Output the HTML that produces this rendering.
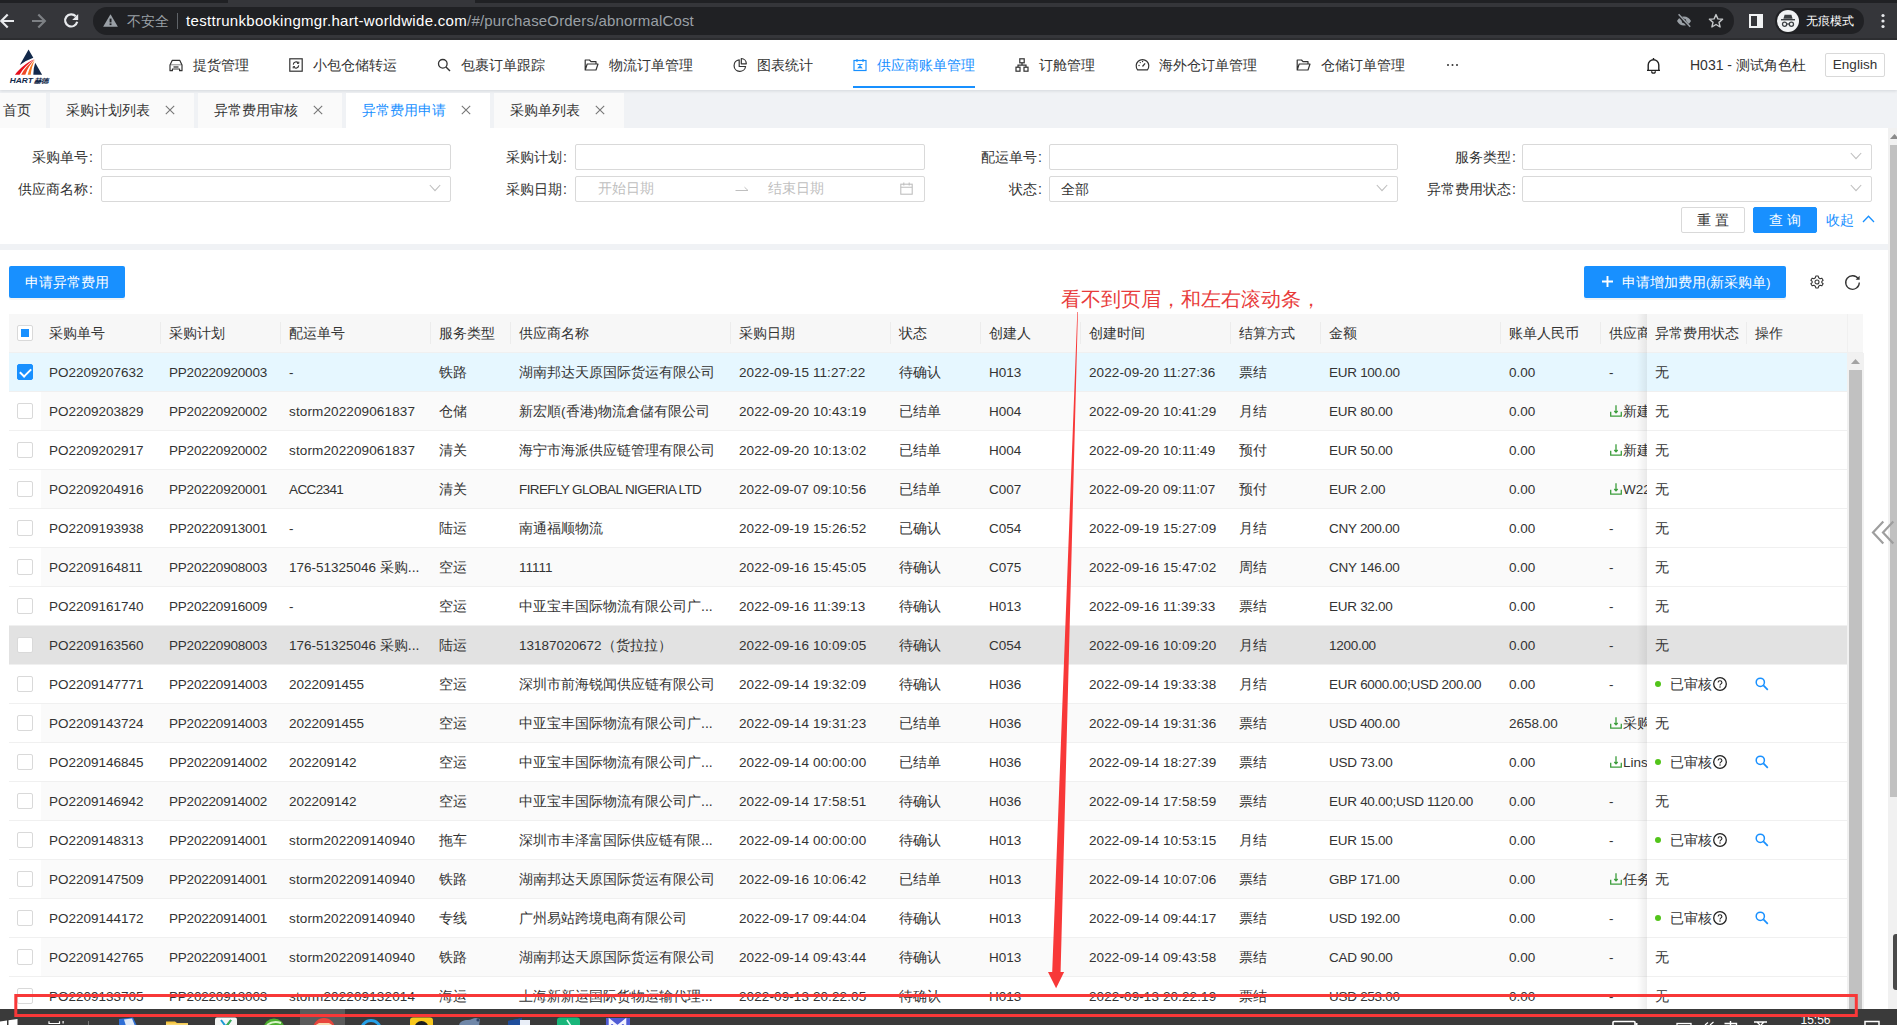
<!DOCTYPE html>
<html lang="zh"><head><meta charset="utf-8"><title>abnormalCost</title>
<style>
*{box-sizing:border-box;margin:0;padding:0}
html,body{width:1897px;height:1025px;overflow:hidden;background:#f0f2f5}
body{font-family:"Liberation Sans",sans-serif;font-size:14px;color:#333;position:relative}
.abs{position:absolute}
/* browser chrome */
#chrome{position:absolute;left:0;top:0;width:1897px;height:40px;background:#35363a}
#chrome .tabstrip{position:absolute;left:0;top:0;width:1897px;height:3px;background:#202124}
#omni{position:absolute;left:93px;top:7px;width:1641px;height:28px;border-radius:14px;background:#202124}
#omni .ns{position:absolute;left:34px;top:5px;font-size:14px;color:#9aa0a6;line-height:18px}
#omni .sep{position:absolute;left:84px;top:6px;width:1px;height:16px;background:#5f6368}
#omni .url{position:absolute;left:93px;top:4px;font-size:15px;line-height:19px;color:#fff;white-space:nowrap;letter-spacing:.31px}
#omni .url em{font-style:normal;color:#9aa0a6;letter-spacing:.17px}
#incog{position:absolute;left:1775px;top:8px;width:89px;height:26px;border-radius:13px;background:#202124}
#incog .av{position:absolute;left:2px;top:2px;width:22px;height:22px;border-radius:11px;background:#f1f3f4}
#incog .t{position:absolute;left:31px;top:5px;font-size:12.2px;line-height:16px;color:#fff;white-space:nowrap}
/* app header */
#hdr{position:absolute;left:0;top:40px;width:1897px;height:50px;background:#fff;box-shadow:0 1px 3px rgba(0,21,41,.12)}
.nav{position:absolute;top:15px;height:20px;line-height:20px;font-size:14px;color:#333;white-space:nowrap}
.nav svg{position:absolute;left:0;top:2px}
.nav span{position:absolute;left:24px;top:0}
.nav.act{color:#1890ff}
#uline{position:absolute;left:853px;top:46px;width:122px;height:2px;background:#1890ff}
#eng{position:absolute;left:1825px;top:13px;width:60px;height:24px;border:1px solid #d9d9d9;border-radius:2px;font-size:13.5px;line-height:22px;text-align:center;color:#333}
/* tabs */
.tab{position:absolute;top:93px;height:35px;background:#fafafa;font-size:14px;line-height:34px;color:#333;white-space:nowrap}
.tab .x{position:absolute;top:12px;width:10px;height:10px}
.tab.act{background:#fff;color:#1890ff}
/* filter */
#filter{position:absolute;left:0;top:128px;width:1888px;height:116px;background:#fff}
.lbl{position:absolute;height:24px;line-height:24px;font-size:14px;color:#333;text-align:right;white-space:nowrap}
.lbl b{font-weight:normal;margin-left:1.3px}
.inp{position:absolute;height:26px;border:1px solid #d9d9d9;border-radius:2px;background:#fff}
.inp .ph{position:absolute;top:0;line-height:23px;font-size:14px;color:#bfbfbf}
.inp .val{position:absolute;left:11px;top:0;line-height:24px;font-size:14px;color:#333}
.inp svg.dn{position:absolute;right:9px;top:7px}
.btn{position:absolute;height:26px;border:1px solid #d9d9d9;border-radius:2px;background:#fff;font-size:14px;line-height:24px;text-align:center;color:#333}
.btn.pri{background:#1890ff;border-color:#1890ff;color:#fff}
/* table card */
#card{position:absolute;left:0;top:250px;width:1888px;height:775px;background:#fff}
.bbtn{position:absolute;top:16px;height:32px;background:#1890ff;border-radius:2px;color:#fff;font-size:14px;line-height:32px;text-align:center;white-space:nowrap;box-shadow:0 2px 0 rgba(0,0,0,.045)}
#tbl{position:absolute;left:9px;top:314px;width:1854px;height:711px;overflow:hidden}
.thead{position:absolute;left:0;top:0;width:1854px;height:39px;background:#f7f7f7;border-bottom:1px solid #f0f0f0}
.th{position:absolute;top:0;height:38px;line-height:39px;padding-left:8px;font-size:14px;color:#333;white-space:nowrap;overflow:hidden}
.th:after{content:"";position:absolute;right:0;top:8px;width:1px;height:22px;background:#ececec}
.th.last:after,.thead .th:last-child:after{display:none}
.hcb{position:absolute;left:0;top:0;width:32px;height:38px}
.hcb i{position:absolute;left:8px;top:11px;width:16px;height:16px;border:1px solid #d9d9d9;border-radius:2px;background:#fff}
.hcb i:after{content:"";position:absolute;left:3px;top:3px;width:8px;height:8px;background:#1890ff}
.tr{position:absolute;left:0;width:1838px;height:39px;background:#fff;border-bottom:1px solid #f0f0f0}
.tr.odd{background:#fafafa}
.tr.sel{background:#e6f7ff}
.tr.hov{background:#e2e2e2}
.td{position:absolute;top:0;height:38px;line-height:38px;padding-left:8px;font-size:14px;color:#333;white-space:nowrap;overflow:hidden}
.cbc{position:absolute;left:0;top:0;width:32px;height:38px;background:#fff}
.sel .cbc{background:#e6f7ff}.hov .cbc{background:#e2e2e2}
.cb{position:absolute;left:8px;top:11px;width:16px;height:16px;border:1px solid #d9d9d9;border-radius:2px;background:#fff}
.cb.on{background:#1890ff;border-color:#1890ff}
.cb.on:after{content:"";position:absolute;left:4px;top:1px;width:5px;height:9px;border:solid #fff;border-width:0 2px 2px 0;transform:rotate(45deg)}
.fx{position:absolute;left:1638px;top:0;width:200px;height:38px;background:#fff;line-height:38px}
.sel .fx{background:#e6f7ff}.hov .fx{background:#e2e2e2}
.fx .wu{position:absolute;left:8px;top:0}
.fx .dot{position:absolute;left:8px;top:16px;width:6px;height:6px;border-radius:3px;background:#52c41a}
.fx .aud{position:absolute;left:23px;top:0}
.fx .qm{position:absolute;left:66px;top:12px}
.fx .mag{position:absolute;left:108px;top:12px}
u{text-decoration:none;font-size:13.5px}
.c1 u{letter-spacing:-.2px}.c10 u{letter-spacing:-.28px}.c5 u,.c8 u{letter-spacing:.1px}u.up{letter-spacing:-.62px}u.st{letter-spacing:.13px}
b.g{font-weight:normal;color:#333}
b.g svg{vertical-align:-1px;margin-right:1px;margin-left:1px}
#fxh{position:absolute;left:1647px;top:314px;width:200px;height:39px;background:#f7f7f7;border-bottom:1px solid #f0f0f0}
#fxshadow{position:absolute;left:1637px;top:314px;width:10px;height:711px;background:linear-gradient(to right,rgba(0,0,0,0),rgba(0,0,0,.07))}
#vsb{position:absolute;left:1847px;top:353px;width:17px;height:672px;background:#f1f1f1}
#vsb .thumb{position:absolute;left:2px;top:17px;width:13px;height:656px;background:#c1c1c1}
#psb{position:absolute;left:1888px;top:128px;width:9px;height:897px;background:#f1f1f1}
#psb .thumb{position:absolute;left:2px;top:17px;width:7px;height:652px;background:#c1c1c1}
#taskbar{position:absolute;left:0;top:1009px;width:1897px;height:16px;background:#3a3a3a;overflow:hidden}
#anno{position:absolute;left:0;top:0;width:1897px;height:1025px;pointer-events:none}
#annot{position:absolute;left:1061px;top:286px;font-size:20.25px;line-height:26px;color:#e83b3b;white-space:nowrap}
</style></head><body>
<div id="chrome">
 <div class="tabstrip"></div><div class="abs" style="left:0;top:38px;width:1897px;height:2px;background:#2d2e31"></div><div class="abs" style="left:228px;top:0;width:247px;height:3px;background:#35363a"></div>
 <svg class="abs" style="left:0;top:12px" width="90" height="18" viewBox="0 0 90 18">
  <path d="M14 9H1.500M7.700 2.500L1.200 9l6.500 6.500" fill="none" stroke="#e8eaed" stroke-width="2.200"/>
  <path d="M32 9h12.500M38.300 2.500L44.800 9l-6.500 6.500" fill="none" stroke="#7d8084" stroke-width="2.200"/>
  <path d="M75.800 4.300A6.100 6.100 0 1 0 77.200 9.800" fill="none" stroke="#e8eaed" stroke-width="2.200"/>
  <path d="M78.200 2v6h-6z" fill="#e8eaed"/>
 </svg>
 <div id="omni">
  <svg class="abs" style="left:10px;top:7px" width="15" height="13" viewBox="0 0 15 13"><path d="M7.500 .3L14.900 12.800H.1z" fill="#9aa0a6"/><rect x="6.600" y="4.600" width="1.900" height="3.800" fill="#202124"/><rect x="6.600" y="9.400" width="1.900" height="1.700" fill="#202124"/></svg>
  <div class="ns">不安全</div><div class="sep"></div>
  <div class="url">testtrunkbookingmgr.hart-worldwide.com<em>/#/purchaseOrders/abnormalCost</em></div>
  <svg class="abs" style="left:1583px;top:6px" width="16" height="16" viewBox="0 0 16 16"><path d="M1 8c1.6-3 4-4.6 7-4.6s5.4 1.600 7 4.600c-1.600 3-4 4.600-7 4.600S2.600 11 1 8z" fill="#9aa0a6"/><circle cx="8" cy="8" r="2.300" fill="#202124"/><path d="M2 1.500L14 14.500" stroke="#202124" stroke-width="3"/><path d="M2.600 1.200L14.200 13.800" stroke="#9aa0a6" stroke-width="1.500"/></svg>
  <svg class="abs" style="left:1615px;top:6px" width="16" height="16" viewBox="0 0 16 16"><path d="M8 1.600l1.900 4.300 4.700.4-3.600 3.100 1.100 4.600L8 11.500 3.900 14l1.100-4.600L1.400 6.300l4.700-.4z" fill="none" stroke="#c4c7c9" stroke-width="1.400" stroke-linejoin="round"/></svg>
 </div>
 <svg class="abs" style="left:1749px;top:14px" width="14" height="14" viewBox="0 0 14 14"><rect x="1" y="1" width="12" height="12" fill="none" stroke="#f1f3f4" stroke-width="2"/><rect x="8" y="1" width="5" height="12" fill="#f1f3f4"/></svg>
 <div id="incog"><div class="av"></div>
  <svg class="abs" style="left:5px;top:6px" width="16" height="14" viewBox="0 0 16 14"><path d="M4.600 .8h6.800l1.200 4H3.400z" fill="#3c4043"/><rect x="1" y="5" width="14" height="1.400" fill="#3c4043"/><circle cx="4.600" cy="10.200" r="2.100" fill="none" stroke="#3c4043" stroke-width="1.300"/><circle cx="11.400" cy="10.200" r="2.100" fill="none" stroke="#3c4043" stroke-width="1.300"/><path d="M6.700 10h2.600" stroke="#3c4043" stroke-width="1.200"/></svg>
  <div class="t">无痕模式</div></div>
 <svg class="abs" style="left:1881px;top:13px" width="4" height="16" viewBox="0 0 4 16"><circle cx="2" cy="2.500" r="1.600" fill="#e8eaed"/><circle cx="2" cy="8" r="1.600" fill="#e8eaed"/><circle cx="2" cy="13.500" r="1.600" fill="#e8eaed"/></svg>
</div>

<div id="hdr">
 <svg class="abs" style="left:8px;top:7px" width="42" height="38" viewBox="0 0 42 38">
  <path d="M20.550 2.500L25.300 10.700Q17.500 13.500 11.800 17.900z" fill="#13294b"/>
  <path d="M27.200 15.800L34.100 27.800H25.300Q25.300 21 27.200 15.800z" fill="#13294b"/>
  <path d="M6.900 27.800C12 21 19 15.500 26.500 12.300 20 16.500 15 21.500 11.500 27.800z" fill="#e60f1c"/>
  <path d="M13.200 27.800C16.500 21.500 21 16.500 26.600 12.600 22.500 17 19.300 22 17.300 27.800z" fill="#f04a24"/>
  <path d="M19.700 27.800C21 22 23.300 17 26.800 12.900 24.600 17.500 23.200 22.500 22.700 27.800z" fill="#f57a22"/>
  <text x="1.700" y="36.300" font-family="Liberation Sans,sans-serif" font-size="7.600" font-weight="bold" font-style="italic" fill="#13294b" textLength="23.200" lengthAdjust="spacingAndGlyphs">HART</text>
  <text x="25.500" y="36" font-family="Liberation Sans,sans-serif" font-size="6.400" font-weight="bold" font-style="italic" fill="#13294b" textLength="14.200" lengthAdjust="spacingAndGlyphs">赫德</text>
 </svg>
 <div class="nav" style="left:169px;width:90px"><svg width="14" height="16" viewBox="0 0 14 16"><path d="M1 13.700V8l2.300-4.700h7.400L13 8v5.700h-2.400V12H3.400v1.700z" fill="none" stroke="#333" stroke-width="1.200" stroke-linejoin="round"/><path d="M4.500 10h5" stroke="#333" stroke-width="1.300"/><path d="M1.500 7.800h11" stroke="#333" stroke-width=".6"/></svg><span>提货管理</span></div>
 <div class="nav" style="left:289px;width:120px"><svg width="14" height="16" viewBox="0 0 14 16"><rect x=".8" y="1.800" width="12.400" height="12.400" fill="none" stroke="#333" stroke-width="1.200"/><path d="M4.300 7.600a2.800 2.800 0 0 1 5-1.600M9.700 8.400a2.800 2.800 0 0 1-5 1.600" fill="none" stroke="#333" stroke-width="1.100"/><path d="M9.800 4.600v1.800H8M4.200 11.400V9.600H6" fill="none" stroke="#333" stroke-width="1"/></svg><span>小包仓储转运</span></div>
 <div class="nav" style="left:437px;width:120px"><svg width="14" height="16" viewBox="0 0 14 16"><circle cx="5.800" cy="6.800" r="4.300" fill="none" stroke="#333" stroke-width="1.300"/><path d="M9 10l4 4" stroke="#333" stroke-width="1.400"/></svg><span>包裹订单跟踪</span></div>
 <div class="nav" style="left:584px;width:120px"><svg width="15" height="16" viewBox="0 0 15 16"><path d="M1.200 13V3h4.300l1.500 1.700h5v2.300M1.200 13l2-6h10.800l-2 6z" fill="none" stroke="#333" stroke-width="1.200" stroke-linejoin="round"/></svg><span style="left:25px">物流订单管理</span></div>
 <div class="nav" style="left:733px;width:90px"><svg width="14" height="16" viewBox="0 0 14 16"><path d="M6.200 2.800A5.800 5.800 0 1 0 12.600 9.500H6.200z" fill="none" stroke="#333" stroke-width="1.200" stroke-linejoin="round"/><path d="M8.300 1.500a5.300 5.300 0 0 1 5 5.300h-5z" fill="none" stroke="#333" stroke-width="1.200" stroke-linejoin="round"/></svg><span>图表统计</span></div>
 <div class="nav act" style="left:853px;width:130px"><svg width="14" height="16" viewBox="0 0 14 16"><rect x="1" y="3.500" width="12" height="10" fill="none" stroke="#1890ff" stroke-width="1.200"/><path d="M4 2v3M10 2v3M4.500 7.500h5M7 7.500v4M4.800 11.500l1.600-2M9.200 11.500L7.600 9.500" fill="none" stroke="#1890ff" stroke-width="1.100"/></svg><span>供应商账单管理</span></div>
 <div class="nav" style="left:1015px;width:90px"><svg width="14" height="16" viewBox="0 0 14 16"><rect x="4.800" y="1.800" width="4.400" height="4" fill="none" stroke="#333" stroke-width="1.200"/><rect x="1" y="10.200" width="4" height="4" fill="none" stroke="#333" stroke-width="1.200"/><rect x="9" y="10.200" width="4" height="4" fill="none" stroke="#333" stroke-width="1.200"/><path d="M7 5.800v2.400M3 10.200v-2h8v2" fill="none" stroke="#333" stroke-width="1.200"/></svg><span>订舱管理</span></div>
 <div class="nav" style="left:1135px;width:130px"><svg width="15" height="16" viewBox="0 0 15 16"><path d="M2.600 12.800a6.300 6.300 0 1 1 9.800 0z" fill="none" stroke="#333" stroke-width="1.200" stroke-linejoin="round"/><path d="M7.500 9.500l2.600-3.200" stroke="#333" stroke-width="1.200"/><path d="M4 8.500h.1M5.200 5.600h.1M7.500 4.500h.1" stroke="#333" stroke-width="1.300" stroke-linecap="round"/></svg><span>海外仓订单管理</span></div>
 <div class="nav" style="left:1296px;width:120px"><svg width="15" height="16" viewBox="0 0 15 16"><path d="M1.200 13V3h4.300l1.500 1.700h5v2.300M1.200 13l2-6h10.800l-2 6z" fill="none" stroke="#333" stroke-width="1.200" stroke-linejoin="round"/></svg><span style="left:25px">仓储订单管理</span></div>
 <svg class="abs" style="left:1446px;top:23px" width="13" height="4" viewBox="0 0 13 4"><circle cx="2" cy="2" r="1" fill="#333"/><circle cx="6.500" cy="2" r="1" fill="#333"/><circle cx="11" cy="2" r="1" fill="#333"/></svg>
 <svg class="abs" style="left:1646px;top:17px" width="15" height="18" viewBox="0 0 15 18"><path d="M2.200 13.200V8a5.300 5.300 0 0 1 10.600 0v5.200M1 13.400h13" fill="none" stroke="#222" stroke-width="1.400"/><path d="M7.500 1v1.800" stroke="#222" stroke-width="1.400"/><path d="M5.600 14.200a1.900 1.900 0 0 0 3.800 0" fill="none" stroke="#222" stroke-width="1.300"/></svg>
 <div class="abs" style="left:1690px;top:15px;line-height:20px;font-size:14px;white-space:nowrap">H031 - 测试角色杜</div>
 <div id="eng">English</div>
 <div id="uline"></div>
</div>

<div class="tab" style="left:0;width:46px"><span class="abs" style="left:3px">首页</span></div>
<div class="tab" style="left:50px;width:144px"><span class="abs" style="left:16px">采购计划列表</span><svg class="x" style="left:115px" viewBox="0 0 10 10"><path d="M.8.8l8.400 8.400M9.200.8L.8 9.200" stroke="#777" stroke-width="1.100"/></svg></div>
<div class="tab" style="left:198px;width:144px"><span class="abs" style="left:16px">异常费用审核</span><svg class="x" style="left:115px" viewBox="0 0 10 10"><path d="M.8.8l8.400 8.400M9.200.8L.8 9.200" stroke="#777" stroke-width="1.100"/></svg></div>
<div class="tab act" style="left:346px;width:144px"><span class="abs" style="left:16px">异常费用申请</span><svg class="x" style="left:115px" viewBox="0 0 10 10"><path d="M.8.8l8.400 8.400M9.200.8L.8 9.200" stroke="#777" stroke-width="1.100"/></svg></div>
<div class="tab" style="left:494px;width:130px"><span class="abs" style="left:16px">采购单列表</span><svg class="x" style="left:101px" viewBox="0 0 10 10"><path d="M.8.8l8.400 8.400M9.200.8L.8 9.200" stroke="#777" stroke-width="1.100"/></svg></div>

<div id="filter">
 <div class="lbl" style="left:0;width:93px;top:17px">采购单号<b>:</b></div><div class="inp" style="left:101px;top:16px;width:350px"></div>
 <div class="lbl" style="left:0;width:93px;top:49px">供应商名称<b>:</b></div><div class="inp" style="left:101px;top:48px;width:350px"><svg class="dn" width="12" height="8" viewBox="0 0 12 8"><path d="M.8 1l5.200 5.600L11.200 1" fill="none" stroke="#bfbfbf" stroke-width="1.100"/></svg></div>
 <div class="lbl" style="left:470px;width:97px;top:17px">采购计划<b>:</b></div><div class="inp" style="left:575px;top:16px;width:350px"></div>
 <div class="lbl" style="left:470px;width:97px;top:49px">采购日期<b>:</b></div><div class="inp" style="left:575px;top:48px;width:350px"><span class="ph" style="left:22px">开始日期</span><svg class="abs" style="left:159px;top:8px" width="14" height="8" viewBox="0 0 14 8"><path d="M.5 5.500h12.500M9.500 2.200l3.500 3.300" fill="none" stroke="#bfbfbf" stroke-width="1"/></svg><span class="ph" style="left:192px">结束日期</span><svg class="abs" style="left:324px;top:5px" width="13" height="13" viewBox="0 0 13 13"><rect x=".8" y="2.200" width="11.400" height="10" fill="none" stroke="#bfbfbf" stroke-width="1.100"/><path d="M.8 5.200h11.400M3.800.5v3M9.200.5v3" stroke="#bfbfbf" stroke-width="1.100"/></svg></div>
 <div class="lbl" style="left:940px;width:102px;top:17px">配运单号<b>:</b></div><div class="inp" style="left:1049px;top:16px;width:349px"></div>
 <div class="lbl" style="left:940px;width:102px;top:49px">状态<b>:</b></div><div class="inp" style="left:1049px;top:48px;width:349px"><span class="val">全部</span><svg class="dn" width="12" height="8" viewBox="0 0 12 8"><path d="M.8 1l5.200 5.600L11.200 1" fill="none" stroke="#bfbfbf" stroke-width="1.100"/></svg></div>
 <div class="lbl" style="left:1400px;width:116px;top:17px">服务类型<b>:</b></div><div class="inp" style="left:1522px;top:16px;width:350px"><svg class="dn" width="12" height="8" viewBox="0 0 12 8"><path d="M.8 1l5.200 5.600L11.200 1" fill="none" stroke="#bfbfbf" stroke-width="1.100"/></svg></div>
 <div class="lbl" style="left:1400px;width:116px;top:49px">异常费用状态<b>:</b></div><div class="inp" style="left:1522px;top:48px;width:350px"><svg class="dn" width="12" height="8" viewBox="0 0 12 8"><path d="M.8 1l5.200 5.600L11.200 1" fill="none" stroke="#bfbfbf" stroke-width="1.100"/></svg></div>
 <div class="btn" style="left:1681px;top:79px;width:64px">重 置</div>
 <div class="btn pri" style="left:1753px;top:79px;width:64px">查 询</div>
 <div class="abs" style="left:1826px;top:79px;line-height:26px;font-size:14px;color:#1890ff;white-space:nowrap">收起</div>
 <svg class="abs" style="left:1862px;top:87px" width="13" height="8" viewBox="0 0 13 8"><path d="M1 7l5.500-5.800L12 7" fill="none" stroke="#1890ff" stroke-width="1.300"/></svg>
</div>

<div id="card">
 <div class="bbtn" style="left:9px;width:116px">申请异常费用</div>
 <div class="bbtn" style="left:1584px;width:202px"><svg class="abs" style="left:18px;top:10px" width="11" height="11" viewBox="0 0 11 11"><path d="M5.500 0v11M0 5.500h11" stroke="#fff" stroke-width="1.900"/></svg><span class="abs" style="left:38px;top:0">申请增加费用<u style="font-size:12.5px">(</u>新采购单<u style="font-size:12.5px">)</u></span></div>
 <svg class="abs" style="left:1810px;top:25px" width="14" height="14" viewBox="0 0 16 16"><path d="M6.600 1.200h2.800l.5 2 1.700 1 2-.6 1.400 2.400-1.500 1.400v1.200l1.500 1.400-1.400 2.400-2-.6-1.700 1-.5 2H6.600l-.5-2-1.700-1-2 .6L1 10l1.500-1.400V7.400L1 6l1.400-2.400 2 .6 1.700-1z" fill="none" stroke="#333" stroke-width="1.200" stroke-linejoin="round"/><circle cx="8" cy="8" r="2.300" fill="none" stroke="#333" stroke-width="1.200"/></svg>
 <svg class="abs" style="left:1844px;top:24px" width="17" height="17" viewBox="0 0 17 17"><path d="M14.300 5A6.800 6.800 0 1 0 15.300 8.500" fill="none" stroke="#333" stroke-width="1.300"/><path d="M15.600 1.800v4h-4z" fill="#333"/></svg>
</div>

<div id="tbl">
<div class="thead">
<div class="hcb"><i></i></div>
<div class="th" style="left:32px;width:120px"><span>采购单号</span></div>
<div class="th" style="left:152px;width:120px"><span>采购计划</span></div>
<div class="th" style="left:272px;width:150px"><span>配运单号</span></div>
<div class="th" style="left:422px;width:80px"><span>服务类型</span></div>
<div class="th" style="left:502px;width:220px"><span>供应商名称</span></div>
<div class="th" style="left:722px;width:160px"><span>采购日期</span></div>
<div class="th" style="left:882px;width:90px"><span>状态</span></div>
<div class="th" style="left:972px;width:100px"><span>创建人</span></div>
<div class="th" style="left:1072px;width:150px"><span>创建时间</span></div>
<div class="th" style="left:1222px;width:90px"><span>结算方式</span></div>
<div class="th" style="left:1312px;width:180px"><span>金额</span></div>
<div class="th" style="left:1492px;width:100px"><span>账单人民币</span></div>
<div class="th" style="left:1592px;width:46px"><span>供应商</span></div>
</div>
<div class="tr sel" style="top:39px">
<div class="cbc"><i class="cb on"></i></div>
<div class="td c0" style="left:32px;width:120px"><span><u>PO2209207632</u></span></div>
<div class="td c1" style="left:152px;width:120px"><span><u>PP20220920003</u></span></div>
<div class="td c2" style="left:272px;width:150px"><span><u>-</u></span></div>
<div class="td c3" style="left:422px;width:80px"><span>铁路</span></div>
<div class="td c4" style="left:502px;width:220px"><span>湖南邦达天原国际货运有限公司</span></div>
<div class="td c5" style="left:722px;width:160px"><span><u>2022-09-15 11:27:22</u></span></div>
<div class="td c6" style="left:882px;width:90px"><span>待确认</span></div>
<div class="td c7" style="left:972px;width:100px"><span><u>H013</u></span></div>
<div class="td c8" style="left:1072px;width:150px"><span><u>2022-09-20 11:27:36</u></span></div>
<div class="td c9" style="left:1222px;width:90px"><span>票结</span></div>
<div class="td c10" style="left:1312px;width:180px"><span><u>EUR 100.00</u></span></div>
<div class="td c11" style="left:1492px;width:100px"><span><u>0.00</u></span></div>
<div class="td c12" style="left:1592px;width:46px"><span><u>-</u></span></div>
<div class="fx"><span class="wu">无</span></div>
</div>
<div class="tr odd" style="top:78px">
<div class="cbc"><i class="cb"></i></div>
<div class="td c0" style="left:32px;width:120px"><span><u>PO2209203829</u></span></div>
<div class="td c1" style="left:152px;width:120px"><span><u>PP20220920002</u></span></div>
<div class="td c2" style="left:272px;width:150px"><span><u class="st">storm202209061837</u></span></div>
<div class="td c3" style="left:422px;width:80px"><span>仓储</span></div>
<div class="td c4" style="left:502px;width:220px"><span>新宏順<u>(</u>香港<u>)</u>物流倉儲有限公司</span></div>
<div class="td c5" style="left:722px;width:160px"><span><u>2022-09-20 10:43:19</u></span></div>
<div class="td c6" style="left:882px;width:90px"><span>已结单</span></div>
<div class="td c7" style="left:972px;width:100px"><span><u>H004</u></span></div>
<div class="td c8" style="left:1072px;width:150px"><span><u>2022-09-20 10:41:29</u></span></div>
<div class="td c9" style="left:1222px;width:90px"><span>月结</span></div>
<div class="td c10" style="left:1312px;width:180px"><span><u>EUR 80.00</u></span></div>
<div class="td c11" style="left:1492px;width:100px"><span><u>0.00</u></span></div>
<div class="td c12" style="left:1592px;width:46px"><span><b class="g"><svg class="dl" viewBox="0 0 12 12" width="12" height="12"><path d="M6 .3v7.400M4.300 6L6 7.800 7.700 6M.7 6.800v4.400h10.600V6.800" fill="none" stroke="#3c9d3c" stroke-width="1.300"/></svg>新建</b></span></div>
<div class="fx"><span class="wu">无</span></div>
</div>
<div class="tr" style="top:117px">
<div class="cbc"><i class="cb"></i></div>
<div class="td c0" style="left:32px;width:120px"><span><u>PO2209202917</u></span></div>
<div class="td c1" style="left:152px;width:120px"><span><u>PP20220920002</u></span></div>
<div class="td c2" style="left:272px;width:150px"><span><u class="st">storm202209061837</u></span></div>
<div class="td c3" style="left:422px;width:80px"><span>清关</span></div>
<div class="td c4" style="left:502px;width:220px"><span>海宁市海派供应链管理有限公司</span></div>
<div class="td c5" style="left:722px;width:160px"><span><u>2022-09-20 10:13:02</u></span></div>
<div class="td c6" style="left:882px;width:90px"><span>已结单</span></div>
<div class="td c7" style="left:972px;width:100px"><span><u>H004</u></span></div>
<div class="td c8" style="left:1072px;width:150px"><span><u>2022-09-20 10:11:49</u></span></div>
<div class="td c9" style="left:1222px;width:90px"><span>预付</span></div>
<div class="td c10" style="left:1312px;width:180px"><span><u>EUR 50.00</u></span></div>
<div class="td c11" style="left:1492px;width:100px"><span><u>0.00</u></span></div>
<div class="td c12" style="left:1592px;width:46px"><span><b class="g"><svg class="dl" viewBox="0 0 12 12" width="12" height="12"><path d="M6 .3v7.400M4.300 6L6 7.800 7.700 6M.7 6.800v4.400h10.600V6.800" fill="none" stroke="#3c9d3c" stroke-width="1.300"/></svg>新建</b></span></div>
<div class="fx"><span class="wu">无</span></div>
</div>
<div class="tr odd" style="top:156px">
<div class="cbc"><i class="cb"></i></div>
<div class="td c0" style="left:32px;width:120px"><span><u>PO2209204916</u></span></div>
<div class="td c1" style="left:152px;width:120px"><span><u>PP20220920001</u></span></div>
<div class="td c2" style="left:272px;width:150px"><span><u class="up">ACC2341</u></span></div>
<div class="td c3" style="left:422px;width:80px"><span>清关</span></div>
<div class="td c4" style="left:502px;width:220px"><span><u class="up">FIREFLY GLOBAL NIGERIA LTD</u></span></div>
<div class="td c5" style="left:722px;width:160px"><span><u>2022-09-07 09:10:56</u></span></div>
<div class="td c6" style="left:882px;width:90px"><span>已结单</span></div>
<div class="td c7" style="left:972px;width:100px"><span><u>C007</u></span></div>
<div class="td c8" style="left:1072px;width:150px"><span><u>2022-09-20 09:11:07</u></span></div>
<div class="td c9" style="left:1222px;width:90px"><span>预付</span></div>
<div class="td c10" style="left:1312px;width:180px"><span><u>EUR 2.00</u></span></div>
<div class="td c11" style="left:1492px;width:100px"><span><u>0.00</u></span></div>
<div class="td c12" style="left:1592px;width:46px"><span><b class="g"><svg class="dl" viewBox="0 0 12 12" width="12" height="12"><path d="M6 .3v7.400M4.300 6L6 7.800 7.700 6M.7 6.800v4.400h10.600V6.800" fill="none" stroke="#3c9d3c" stroke-width="1.300"/></svg><u>W22</u></b></span></div>
<div class="fx"><span class="wu">无</span></div>
</div>
<div class="tr" style="top:195px">
<div class="cbc"><i class="cb"></i></div>
<div class="td c0" style="left:32px;width:120px"><span><u>PO2209193938</u></span></div>
<div class="td c1" style="left:152px;width:120px"><span><u>PP20220913001</u></span></div>
<div class="td c2" style="left:272px;width:150px"><span><u>-</u></span></div>
<div class="td c3" style="left:422px;width:80px"><span>陆运</span></div>
<div class="td c4" style="left:502px;width:220px"><span>南通福顺物流</span></div>
<div class="td c5" style="left:722px;width:160px"><span><u>2022-09-19 15:26:52</u></span></div>
<div class="td c6" style="left:882px;width:90px"><span>已确认</span></div>
<div class="td c7" style="left:972px;width:100px"><span><u>C054</u></span></div>
<div class="td c8" style="left:1072px;width:150px"><span><u>2022-09-19 15:27:09</u></span></div>
<div class="td c9" style="left:1222px;width:90px"><span>月结</span></div>
<div class="td c10" style="left:1312px;width:180px"><span><u>CNY 200.00</u></span></div>
<div class="td c11" style="left:1492px;width:100px"><span><u>0.00</u></span></div>
<div class="td c12" style="left:1592px;width:46px"><span><u>-</u></span></div>
<div class="fx"><span class="wu">无</span></div>
</div>
<div class="tr odd" style="top:234px">
<div class="cbc"><i class="cb"></i></div>
<div class="td c0" style="left:32px;width:120px"><span><u>PO2209164811</u></span></div>
<div class="td c1" style="left:152px;width:120px"><span><u>PP20220908003</u></span></div>
<div class="td c2" style="left:272px;width:150px"><span><u>176-51325046 </u>采购...</span></div>
<div class="td c3" style="left:422px;width:80px"><span>空运</span></div>
<div class="td c4" style="left:502px;width:220px"><span><u>11111</u></span></div>
<div class="td c5" style="left:722px;width:160px"><span><u>2022-09-16 15:45:05</u></span></div>
<div class="td c6" style="left:882px;width:90px"><span>待确认</span></div>
<div class="td c7" style="left:972px;width:100px"><span><u>C075</u></span></div>
<div class="td c8" style="left:1072px;width:150px"><span><u>2022-09-16 15:47:02</u></span></div>
<div class="td c9" style="left:1222px;width:90px"><span>周结</span></div>
<div class="td c10" style="left:1312px;width:180px"><span><u>CNY 146.00</u></span></div>
<div class="td c11" style="left:1492px;width:100px"><span><u>0.00</u></span></div>
<div class="td c12" style="left:1592px;width:46px"><span><u>-</u></span></div>
<div class="fx"><span class="wu">无</span></div>
</div>
<div class="tr" style="top:273px">
<div class="cbc"><i class="cb"></i></div>
<div class="td c0" style="left:32px;width:120px"><span><u>PO2209161740</u></span></div>
<div class="td c1" style="left:152px;width:120px"><span><u>PP20220916009</u></span></div>
<div class="td c2" style="left:272px;width:150px"><span><u>-</u></span></div>
<div class="td c3" style="left:422px;width:80px"><span>空运</span></div>
<div class="td c4" style="left:502px;width:220px"><span>中亚宝丰国际物流有限公司广...</span></div>
<div class="td c5" style="left:722px;width:160px"><span><u>2022-09-16 11:39:13</u></span></div>
<div class="td c6" style="left:882px;width:90px"><span>待确认</span></div>
<div class="td c7" style="left:972px;width:100px"><span><u>H013</u></span></div>
<div class="td c8" style="left:1072px;width:150px"><span><u>2022-09-16 11:39:33</u></span></div>
<div class="td c9" style="left:1222px;width:90px"><span>票结</span></div>
<div class="td c10" style="left:1312px;width:180px"><span><u>EUR 32.00</u></span></div>
<div class="td c11" style="left:1492px;width:100px"><span><u>0.00</u></span></div>
<div class="td c12" style="left:1592px;width:46px"><span><u>-</u></span></div>
<div class="fx"><span class="wu">无</span></div>
</div>
<div class="tr hov" style="top:312px">
<div class="cbc"><i class="cb"></i></div>
<div class="td c0" style="left:32px;width:120px"><span><u>PO2209163560</u></span></div>
<div class="td c1" style="left:152px;width:120px"><span><u>PP20220908003</u></span></div>
<div class="td c2" style="left:272px;width:150px"><span><u>176-51325046 </u>采购...</span></div>
<div class="td c3" style="left:422px;width:80px"><span>陆运</span></div>
<div class="td c4" style="left:502px;width:220px"><span><u>13187020672</u>（货拉拉）</span></div>
<div class="td c5" style="left:722px;width:160px"><span><u>2022-09-16 10:09:05</u></span></div>
<div class="td c6" style="left:882px;width:90px"><span>待确认</span></div>
<div class="td c7" style="left:972px;width:100px"><span><u>C054</u></span></div>
<div class="td c8" style="left:1072px;width:150px"><span><u>2022-09-16 10:09:20</u></span></div>
<div class="td c9" style="left:1222px;width:90px"><span>月结</span></div>
<div class="td c10" style="left:1312px;width:180px"><span><u>1200.00</u></span></div>
<div class="td c11" style="left:1492px;width:100px"><span><u>0.00</u></span></div>
<div class="td c12" style="left:1592px;width:46px"><span><u>-</u></span></div>
<div class="fx"><span class="wu">无</span></div>
</div>
<div class="tr" style="top:351px">
<div class="cbc"><i class="cb"></i></div>
<div class="td c0" style="left:32px;width:120px"><span><u>PO2209147771</u></span></div>
<div class="td c1" style="left:152px;width:120px"><span><u>PP20220914003</u></span></div>
<div class="td c2" style="left:272px;width:150px"><span><u>2022091455</u></span></div>
<div class="td c3" style="left:422px;width:80px"><span>空运</span></div>
<div class="td c4" style="left:502px;width:220px"><span>深圳市前海锐闻供应链有限公司</span></div>
<div class="td c5" style="left:722px;width:160px"><span><u>2022-09-14 19:32:09</u></span></div>
<div class="td c6" style="left:882px;width:90px"><span>待确认</span></div>
<div class="td c7" style="left:972px;width:100px"><span><u>H036</u></span></div>
<div class="td c8" style="left:1072px;width:150px"><span><u>2022-09-14 19:33:38</u></span></div>
<div class="td c9" style="left:1222px;width:90px"><span>月结</span></div>
<div class="td c10" style="left:1312px;width:180px"><span><u>EUR 6000.00;USD 200.00</u></span></div>
<div class="td c11" style="left:1492px;width:100px"><span><u>0.00</u></span></div>
<div class="td c12" style="left:1592px;width:46px"><span><u>-</u></span></div>
<div class="fx"><span class="dot"></span><span class="aud">已审核</span><svg class="qm" viewBox="0 0 14 14" width="14" height="14"><circle cx="7" cy="7" r="6.300" fill="none" stroke="#222" stroke-width="1.300"/><path d="M5.100 5.600c0-1.200.9-1.900 1.900-1.900s1.900.7 1.900 1.800c0 1.300-1.900 1.400-1.900 2.900" fill="none" stroke="#222" stroke-width="1.100"/><circle cx="7" cy="10.100" r=".75" fill="#222"/></svg><svg class="mag" viewBox="0 0 14 14" width="14" height="14"><circle cx="5.300" cy="5.300" r="4.100" fill="none" stroke="#1890ff" stroke-width="1.500"/><path d="M8.400 8.400L12.800 12.800" stroke="#1890ff" stroke-width="1.700"/></svg></div>
</div>
<div class="tr odd" style="top:390px">
<div class="cbc"><i class="cb"></i></div>
<div class="td c0" style="left:32px;width:120px"><span><u>PO2209143724</u></span></div>
<div class="td c1" style="left:152px;width:120px"><span><u>PP20220914003</u></span></div>
<div class="td c2" style="left:272px;width:150px"><span><u>2022091455</u></span></div>
<div class="td c3" style="left:422px;width:80px"><span>空运</span></div>
<div class="td c4" style="left:502px;width:220px"><span>中亚宝丰国际物流有限公司广...</span></div>
<div class="td c5" style="left:722px;width:160px"><span><u>2022-09-14 19:31:23</u></span></div>
<div class="td c6" style="left:882px;width:90px"><span>已结单</span></div>
<div class="td c7" style="left:972px;width:100px"><span><u>H036</u></span></div>
<div class="td c8" style="left:1072px;width:150px"><span><u>2022-09-14 19:31:36</u></span></div>
<div class="td c9" style="left:1222px;width:90px"><span>票结</span></div>
<div class="td c10" style="left:1312px;width:180px"><span><u>USD 400.00</u></span></div>
<div class="td c11" style="left:1492px;width:100px"><span><u>2658.00</u></span></div>
<div class="td c12" style="left:1592px;width:46px"><span><b class="g"><svg class="dl" viewBox="0 0 12 12" width="12" height="12"><path d="M6 .3v7.400M4.300 6L6 7.800 7.700 6M.7 6.800v4.400h10.600V6.800" fill="none" stroke="#3c9d3c" stroke-width="1.300"/></svg>采购</b></span></div>
<div class="fx"><span class="wu">无</span></div>
</div>
<div class="tr" style="top:429px">
<div class="cbc"><i class="cb"></i></div>
<div class="td c0" style="left:32px;width:120px"><span><u>PO2209146845</u></span></div>
<div class="td c1" style="left:152px;width:120px"><span><u>PP20220914002</u></span></div>
<div class="td c2" style="left:272px;width:150px"><span><u>202209142</u></span></div>
<div class="td c3" style="left:422px;width:80px"><span>空运</span></div>
<div class="td c4" style="left:502px;width:220px"><span>中亚宝丰国际物流有限公司广...</span></div>
<div class="td c5" style="left:722px;width:160px"><span><u>2022-09-14 00:00:00</u></span></div>
<div class="td c6" style="left:882px;width:90px"><span>已结单</span></div>
<div class="td c7" style="left:972px;width:100px"><span><u>H036</u></span></div>
<div class="td c8" style="left:1072px;width:150px"><span><u>2022-09-14 18:27:39</u></span></div>
<div class="td c9" style="left:1222px;width:90px"><span>票结</span></div>
<div class="td c10" style="left:1312px;width:180px"><span><u>USD 73.00</u></span></div>
<div class="td c11" style="left:1492px;width:100px"><span><u>0.00</u></span></div>
<div class="td c12" style="left:1592px;width:46px"><span><b class="g"><svg class="dl" viewBox="0 0 12 12" width="12" height="12"><path d="M6 .3v7.400M4.300 6L6 7.800 7.700 6M.7 6.800v4.400h10.600V6.800" fill="none" stroke="#3c9d3c" stroke-width="1.300"/></svg><u>Lins</u></b></span></div>
<div class="fx"><span class="dot"></span><span class="aud">已审核</span><svg class="qm" viewBox="0 0 14 14" width="14" height="14"><circle cx="7" cy="7" r="6.300" fill="none" stroke="#222" stroke-width="1.300"/><path d="M5.100 5.600c0-1.200.9-1.900 1.900-1.900s1.900.7 1.900 1.800c0 1.300-1.900 1.400-1.900 2.900" fill="none" stroke="#222" stroke-width="1.100"/><circle cx="7" cy="10.100" r=".75" fill="#222"/></svg><svg class="mag" viewBox="0 0 14 14" width="14" height="14"><circle cx="5.300" cy="5.300" r="4.100" fill="none" stroke="#1890ff" stroke-width="1.500"/><path d="M8.400 8.400L12.800 12.800" stroke="#1890ff" stroke-width="1.700"/></svg></div>
</div>
<div class="tr odd" style="top:468px">
<div class="cbc"><i class="cb"></i></div>
<div class="td c0" style="left:32px;width:120px"><span><u>PO2209146942</u></span></div>
<div class="td c1" style="left:152px;width:120px"><span><u>PP20220914002</u></span></div>
<div class="td c2" style="left:272px;width:150px"><span><u>202209142</u></span></div>
<div class="td c3" style="left:422px;width:80px"><span>空运</span></div>
<div class="td c4" style="left:502px;width:220px"><span>中亚宝丰国际物流有限公司广...</span></div>
<div class="td c5" style="left:722px;width:160px"><span><u>2022-09-14 17:58:51</u></span></div>
<div class="td c6" style="left:882px;width:90px"><span>待确认</span></div>
<div class="td c7" style="left:972px;width:100px"><span><u>H036</u></span></div>
<div class="td c8" style="left:1072px;width:150px"><span><u>2022-09-14 17:58:59</u></span></div>
<div class="td c9" style="left:1222px;width:90px"><span>票结</span></div>
<div class="td c10" style="left:1312px;width:180px"><span><u>EUR 40.00;USD 1120.00</u></span></div>
<div class="td c11" style="left:1492px;width:100px"><span><u>0.00</u></span></div>
<div class="td c12" style="left:1592px;width:46px"><span><u>-</u></span></div>
<div class="fx"><span class="wu">无</span></div>
</div>
<div class="tr" style="top:507px">
<div class="cbc"><i class="cb"></i></div>
<div class="td c0" style="left:32px;width:120px"><span><u>PO2209148313</u></span></div>
<div class="td c1" style="left:152px;width:120px"><span><u>PP20220914001</u></span></div>
<div class="td c2" style="left:272px;width:150px"><span><u class="st">storm202209140940</u></span></div>
<div class="td c3" style="left:422px;width:80px"><span>拖车</span></div>
<div class="td c4" style="left:502px;width:220px"><span>深圳市丰泽富国际供应链有限...</span></div>
<div class="td c5" style="left:722px;width:160px"><span><u>2022-09-14 00:00:00</u></span></div>
<div class="td c6" style="left:882px;width:90px"><span>待确认</span></div>
<div class="td c7" style="left:972px;width:100px"><span><u>H013</u></span></div>
<div class="td c8" style="left:1072px;width:150px"><span><u>2022-09-14 10:53:15</u></span></div>
<div class="td c9" style="left:1222px;width:90px"><span>月结</span></div>
<div class="td c10" style="left:1312px;width:180px"><span><u>EUR 15.00</u></span></div>
<div class="td c11" style="left:1492px;width:100px"><span><u>0.00</u></span></div>
<div class="td c12" style="left:1592px;width:46px"><span><u>-</u></span></div>
<div class="fx"><span class="dot"></span><span class="aud">已审核</span><svg class="qm" viewBox="0 0 14 14" width="14" height="14"><circle cx="7" cy="7" r="6.300" fill="none" stroke="#222" stroke-width="1.300"/><path d="M5.100 5.600c0-1.200.9-1.900 1.900-1.900s1.900.7 1.900 1.800c0 1.300-1.900 1.400-1.900 2.900" fill="none" stroke="#222" stroke-width="1.100"/><circle cx="7" cy="10.100" r=".75" fill="#222"/></svg><svg class="mag" viewBox="0 0 14 14" width="14" height="14"><circle cx="5.300" cy="5.300" r="4.100" fill="none" stroke="#1890ff" stroke-width="1.500"/><path d="M8.400 8.400L12.800 12.800" stroke="#1890ff" stroke-width="1.700"/></svg></div>
</div>
<div class="tr odd" style="top:546px">
<div class="cbc"><i class="cb"></i></div>
<div class="td c0" style="left:32px;width:120px"><span><u>PO2209147509</u></span></div>
<div class="td c1" style="left:152px;width:120px"><span><u>PP20220914001</u></span></div>
<div class="td c2" style="left:272px;width:150px"><span><u class="st">storm202209140940</u></span></div>
<div class="td c3" style="left:422px;width:80px"><span>铁路</span></div>
<div class="td c4" style="left:502px;width:220px"><span>湖南邦达天原国际货运有限公司</span></div>
<div class="td c5" style="left:722px;width:160px"><span><u>2022-09-16 10:06:42</u></span></div>
<div class="td c6" style="left:882px;width:90px"><span>已结单</span></div>
<div class="td c7" style="left:972px;width:100px"><span><u>H013</u></span></div>
<div class="td c8" style="left:1072px;width:150px"><span><u>2022-09-14 10:07:06</u></span></div>
<div class="td c9" style="left:1222px;width:90px"><span>票结</span></div>
<div class="td c10" style="left:1312px;width:180px"><span><u>GBP 171.00</u></span></div>
<div class="td c11" style="left:1492px;width:100px"><span><u>0.00</u></span></div>
<div class="td c12" style="left:1592px;width:46px"><span><b class="g"><svg class="dl" viewBox="0 0 12 12" width="12" height="12"><path d="M6 .3v7.400M4.300 6L6 7.800 7.700 6M.7 6.800v4.400h10.600V6.800" fill="none" stroke="#3c9d3c" stroke-width="1.300"/></svg>任务</b></span></div>
<div class="fx"><span class="wu">无</span></div>
</div>
<div class="tr" style="top:585px">
<div class="cbc"><i class="cb"></i></div>
<div class="td c0" style="left:32px;width:120px"><span><u>PO2209144172</u></span></div>
<div class="td c1" style="left:152px;width:120px"><span><u>PP20220914001</u></span></div>
<div class="td c2" style="left:272px;width:150px"><span><u class="st">storm202209140940</u></span></div>
<div class="td c3" style="left:422px;width:80px"><span>专线</span></div>
<div class="td c4" style="left:502px;width:220px"><span>广州易站跨境电商有限公司</span></div>
<div class="td c5" style="left:722px;width:160px"><span><u>2022-09-17 09:44:04</u></span></div>
<div class="td c6" style="left:882px;width:90px"><span>待确认</span></div>
<div class="td c7" style="left:972px;width:100px"><span><u>H013</u></span></div>
<div class="td c8" style="left:1072px;width:150px"><span><u>2022-09-14 09:44:17</u></span></div>
<div class="td c9" style="left:1222px;width:90px"><span>票结</span></div>
<div class="td c10" style="left:1312px;width:180px"><span><u>USD 192.00</u></span></div>
<div class="td c11" style="left:1492px;width:100px"><span><u>0.00</u></span></div>
<div class="td c12" style="left:1592px;width:46px"><span><u>-</u></span></div>
<div class="fx"><span class="dot"></span><span class="aud">已审核</span><svg class="qm" viewBox="0 0 14 14" width="14" height="14"><circle cx="7" cy="7" r="6.300" fill="none" stroke="#222" stroke-width="1.300"/><path d="M5.100 5.600c0-1.200.9-1.900 1.900-1.900s1.900.7 1.900 1.800c0 1.300-1.900 1.400-1.900 2.900" fill="none" stroke="#222" stroke-width="1.100"/><circle cx="7" cy="10.100" r=".75" fill="#222"/></svg><svg class="mag" viewBox="0 0 14 14" width="14" height="14"><circle cx="5.300" cy="5.300" r="4.100" fill="none" stroke="#1890ff" stroke-width="1.500"/><path d="M8.400 8.400L12.800 12.800" stroke="#1890ff" stroke-width="1.700"/></svg></div>
</div>
<div class="tr odd" style="top:624px">
<div class="cbc"><i class="cb"></i></div>
<div class="td c0" style="left:32px;width:120px"><span><u>PO2209142765</u></span></div>
<div class="td c1" style="left:152px;width:120px"><span><u>PP20220914001</u></span></div>
<div class="td c2" style="left:272px;width:150px"><span><u class="st">storm202209140940</u></span></div>
<div class="td c3" style="left:422px;width:80px"><span>铁路</span></div>
<div class="td c4" style="left:502px;width:220px"><span>湖南邦达天原国际货运有限公司</span></div>
<div class="td c5" style="left:722px;width:160px"><span><u>2022-09-14 09:43:44</u></span></div>
<div class="td c6" style="left:882px;width:90px"><span>待确认</span></div>
<div class="td c7" style="left:972px;width:100px"><span><u>H013</u></span></div>
<div class="td c8" style="left:1072px;width:150px"><span><u>2022-09-14 09:43:58</u></span></div>
<div class="td c9" style="left:1222px;width:90px"><span>票结</span></div>
<div class="td c10" style="left:1312px;width:180px"><span><u>CAD 90.00</u></span></div>
<div class="td c11" style="left:1492px;width:100px"><span><u>0.00</u></span></div>
<div class="td c12" style="left:1592px;width:46px"><span><u>-</u></span></div>
<div class="fx"><span class="wu">无</span></div>
</div>
<div class="tr" style="top:663px">
<div class="cbc"><i class="cb"></i></div>
<div class="td c0" style="left:32px;width:120px"><span><u>PO2209133705</u></span></div>
<div class="td c1" style="left:152px;width:120px"><span><u>PP20220913003</u></span></div>
<div class="td c2" style="left:272px;width:150px"><span><u class="st">storm202209132014</u></span></div>
<div class="td c3" style="left:422px;width:80px"><span>海运</span></div>
<div class="td c4" style="left:502px;width:220px"><span>上海新新运国际货物运输代理...</span></div>
<div class="td c5" style="left:722px;width:160px"><span><u>2022-09-13 20:22:05</u></span></div>
<div class="td c6" style="left:882px;width:90px"><span>待确认</span></div>
<div class="td c7" style="left:972px;width:100px"><span><u>H013</u></span></div>
<div class="td c8" style="left:1072px;width:150px"><span><u>2022-09-13 20:22:19</u></span></div>
<div class="td c9" style="left:1222px;width:90px"><span>票结</span></div>
<div class="td c10" style="left:1312px;width:180px"><span><u>USD 253.00</u></span></div>
<div class="td c11" style="left:1492px;width:100px"><span><u>0.00</u></span></div>
<div class="td c12" style="left:1592px;width:46px"><span><u>-</u></span></div>
<div class="fx"><span class="wu">无</span></div>
</div>
</div>
<div id="fxshadow"></div>
<div class="abs" style="left:1847px;top:314px;width:1px;height:39px;background:#f0f0f0"></div><div id="fxh"><div class="th" style="left:0;width:100px"><span>异常费用状态</span></div><div class="th last" style="left:100px;width:100px"><span>操作</span></div></div>
<div id="vsb"><svg class="abs" style="left:4px;top:6px" width="9" height="5" viewBox="0 0 9 5"><path d="M0 5L4.500 0 9 5z" fill="#a3a3a3"/></svg><div class="thumb"></div></div>
<div id="psb"><svg class="abs" style="left:2px;top:6px" width="9" height="5" viewBox="0 0 9 5"><path d="M0 5L4.500 0 9 5z" fill="#8a8a8a"/></svg><div class="thumb"></div></div>
<svg class="abs" style="left:1870px;top:519px" width="27" height="28" viewBox="1870 519 27 28"><path d="M1883.300 521.400L1873 532.500l10.300 11.100M1893.300 521.400L1883 532.500l10.300 11.100" fill="none" stroke="#9e9e9e" stroke-width="2.200"/></svg>
<div class="abs" style="left:1893px;top:934px;width:6px;height:56px;border-radius:3px;background:#4a4a4a"></div>

<div id="taskbar">
<div class="abs" style="left:300px;top:0;width:45px;height:16px;background:#5b5b5b"></div>
<svg class="abs" style="left:0;top:0" width="1897" height="16" viewBox="0 1009 1897 16">
 <path d="M0 1021.500l7-1v5H0zM8.500 1020.300l9-1.300v6h-9z" fill="#fff"/>
 <path d="M49 1021.300v2.200h10.500v-2.200" stroke="#fff" stroke-width="1.200" fill="none"/><rect x="62.500" y="1021" width="1.200" height="2.500" fill="#fff"/>
 <rect x="88" y="1021" width="1" height="4" fill="#777"/>
 <g transform="translate(0,1)">
 <path d="M119 1018l14-1.500 4 8.500h-18z" fill="#2f6fd6"/><path d="M124 1018.500l8-1 3 7.500h-9z" fill="#dfe9f7"/>
 <path d="M166 1020.500h9l2 1.500h11v3h-22z" fill="#f5c33b"/><rect x="166" y="1022.500" width="22" height="3" fill="#f7d774"/>
 <rect x="215" y="1016.500" width="22" height="9" rx="2" fill="#f4f6f5"/><path d="M221 1019l4.500 6M231 1019l-4.500 6" stroke="#1c9ad6" stroke-width="2" fill="none"/><path d="M231 1019l-4.500 6" stroke="#3fae4a" stroke-width="2"/>
 <circle cx="274" cy="1028" r="10.500" fill="#4caf2f"/><path d="M267 1024c4-3 9-4 14-2" stroke="#d8f3c8" stroke-width="2" fill="none"/>
 <circle cx="324" cy="1028" r="11" fill="#e8453c"/><path d="M315 1024.500l4-2.500h10l4 2.500z" fill="#f6d9b0"/>
 <circle cx="371" cy="1029" r="9.500" fill="none" stroke="#25a0e8" stroke-width="3"/>
 <rect x="410" y="1016.500" width="23" height="10" rx="3" fill="#f8c81c"/><circle cx="421.500" cy="1027" r="7" fill="#1d1d1d"/>
 <path d="M459 1025c0-4 4-6 9-6 3 0 5-2 8-2l4 1-1 7z" fill="#6f87a8"/><circle cx="478" cy="1019" r="1.600" fill="#2d4468"/>
 <path d="M508 1020l14-3v8h-14z" fill="#1f4e9c"/><rect x="519" y="1019" width="11" height="6" fill="#e9eef7"/><path d="M508 1020l12-2.500v7.500h-12z" fill="#1f4e9c"/>
 <rect x="557" y="1016.500" width="23" height="10" rx="3" fill="#18b67a"/><path d="M567 1019l4 6" stroke="#d9fff0" stroke-width="1.500"/>
 <rect x="606" y="1017" width="24" height="9" fill="#4f5bd5"/><path d="M610 1026v-6.500l7.500 6 7.500-6v6.500" fill="none" stroke="#f2f2ff" stroke-width="2.600"/>
 </g>
 <rect x="1613" y="1021.500" width="22" height="6" rx="1" fill="none" stroke="#fff" stroke-width="1.600"/><rect x="1635.500" y="1023" width="2" height="3" fill="#fff"/>
 <rect x="1677" y="1023.500" width="14" height="4" fill="none" stroke="#fff" stroke-width="1.300"/>
 <path d="M1705 1025l3-2.500M1710 1025l3.500-3" stroke="#fff" stroke-width="1.200"/>
 <path d="M1730.500 1021v4M1724.500 1023.500h12v2" stroke="#fff" stroke-width="1.400" fill="none"/>
 <path d="M1754 1022h13M1757 1022l3 3M1764 1022l-3 3" stroke="#fff" stroke-width="1.300" fill="none"/>
 <text x="1800.500" y="1023.600" font-family="Liberation Sans,sans-serif" font-size="12" fill="#fff">15:56</text>
 <rect x="1865" y="1021.500" width="14" height="6" fill="none" stroke="#fff" stroke-width="1.500"/>
</svg>

</div>

<div id="annot">看不到页眉，和左右滚动条，</div>
<svg id="anno" viewBox="0 0 1897 1025">
 <path d="M1077.300 312h.6L1060.600 972h3.500L1056.100 988.300 1048 972h4.200z" fill="#f83838"/>
 <rect x="15.800" y="995.500" width="1840.500" height="20" fill="none" stroke="#f83838" stroke-width="3"/>
</svg>

</body></html>
